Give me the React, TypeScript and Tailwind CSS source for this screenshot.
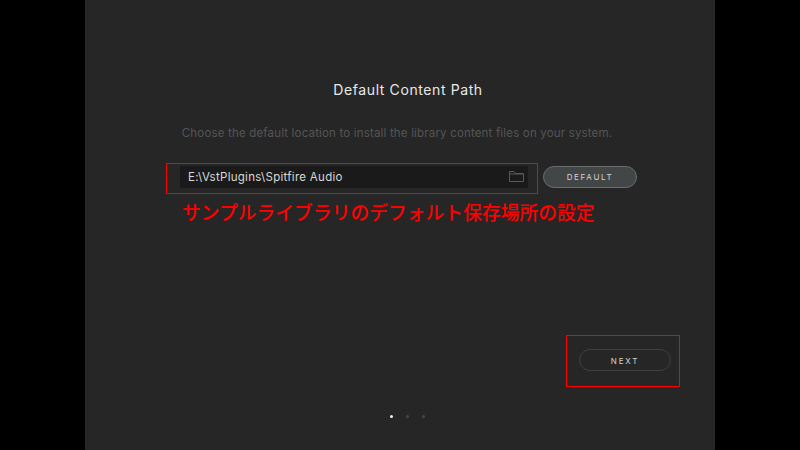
function FolderIcon() {
  return (
    <svg className="mb-[1px]" width="15" height="11" viewBox="0 0 15 11" fill="none" stroke="#5a5a5a" strokeWidth="1">
      <path d="M0.5 10.5V0.5H5L6.5 2.5H14.5V10.5H0.5Z" />
      <path d="M0.5 3H14.5" />
    </svg>
  );
}

const sans = "font-['Inter','Liberation_Sans',sans-serif]";

export default function App() {
  return (
    <div className={`flex h-[450px] w-[800px] justify-center overflow-hidden bg-black ${sans}`}>
      <div className="flex w-[630px] flex-col bg-[#262626]">
        <h1 className="mt-[80px] h-[20px] pl-[16px] text-center text-[14px] leading-[20px] font-normal tracking-[0.6px] text-[#e8e8e8]">
          Default Content Path
        </h1>
        <p className="mt-[24px] h-[18px] pr-[6px] text-center text-[11.5px] leading-[18px] tracking-[0.175px] text-[#555555]">
          Choose the default location to install the library content files on your system.
        </p>

        <div className="mt-[24px] ml-[95px] flex items-center gap-[15px]">
          <div className="relative flex h-[22px] w-[348px] items-center justify-between rounded-[1px] bg-[#1a1a1a] pr-[4px] pl-[8px]">
            <span className="pt-[1px] text-[11.5px] tracking-[0.28px] text-[#d8d8d8]">E:\VstPlugins\Spitfire Audio</span>
            <FolderIcon />
            <div className="absolute top-[-3px] left-[-14px] h-[31px] w-[372px] border border-[#ff0000]" />
          </div>
          <button className="flex h-[22px] w-[94px] items-center justify-center rounded-full border border-[#6a6d6d] bg-[#434647] text-[8px] tracking-[1.7px] text-[#d4d4d4]">
            DEFAULT
          </button>
        </div>

        <p className="mt-[12px] ml-[97px] h-[24px] font-['Noto_Sans_CJK_JP',sans-serif] text-[18.8px] leading-[24px] font-medium whitespace-nowrap text-[#ff0000]">
          サンプルライブラリのデフォルト保存場所の設定
        </p>

        <div className="mt-[125px] ml-[494px]">
          <button className="relative flex h-[22px] w-[92px] items-center justify-center rounded-full border border-[#3e3f3f] pt-[1px] text-[8px] tracking-[1.8px] text-[#d4d4d4]">
            NEXT
            <div className="absolute top-[-15px] left-[-14px] h-[52px] w-[114px] border border-[#ff0000]" />
          </button>
        </div>

        <div className="mt-[44px] flex justify-center gap-[13px] pl-[14px]">
          <div className="h-[3px] w-[3px] rounded-full bg-[#f0f0f0]" />
          <div className="h-[3px] w-[3px] rounded-full bg-[#4a4a4a]" />
          <div className="h-[3px] w-[3px] rounded-full bg-[#4a4a4a]" />
        </div>
      </div>
    </div>
  );
}
